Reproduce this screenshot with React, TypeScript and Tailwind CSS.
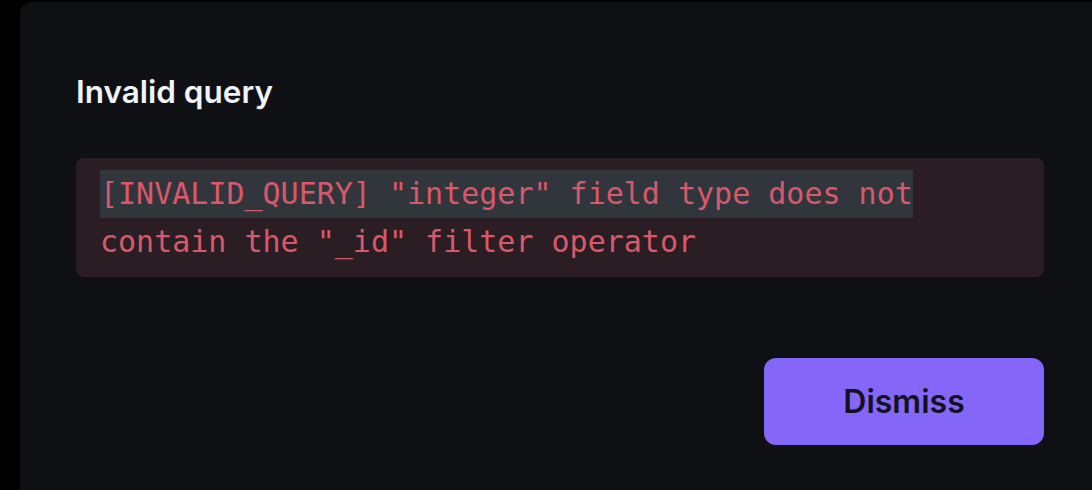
export default function App() {
  return (
    <div className="min-h-screen bg-black pl-5 pt-[2px] overflow-hidden">
      <div className="h-[488px] rounded-tl-xl bg-[#0e1014] pl-14 pr-12 pt-[70px]" style={{ fontFamily: 'Inter, "Noto Sans", sans-serif' }}>
        <h2 className="text-[31.5px] leading-[40px] font-semibold text-[#f0f3f8]">Invalid query</h2>

        <div
          className="mt-[46px] rounded-lg bg-[#2b1d24] pl-6 pr-6 pt-3 pb-[11px] text-[30px] leading-[48px] text-[#d95869]"
          style={{ fontFamily: '"DejaVu Sans Mono", "Liberation Mono", monospace' }}
        >
          <div>
            <span className="inline-block bg-[#31363d]">[INVALID_QUERY] "integer" field type does not</span>
          </div>
          <div>contain the "_id" filter operator</div>
        </div>

        <div className="mt-[81px] flex justify-end">
          <button className="h-[87px] w-[280px] rounded-xl bg-[#8467f8] text-[32px] font-semibold text-[#15121f]">
            Dismiss
          </button>
        </div>
      </div>
    </div>
  );
}
